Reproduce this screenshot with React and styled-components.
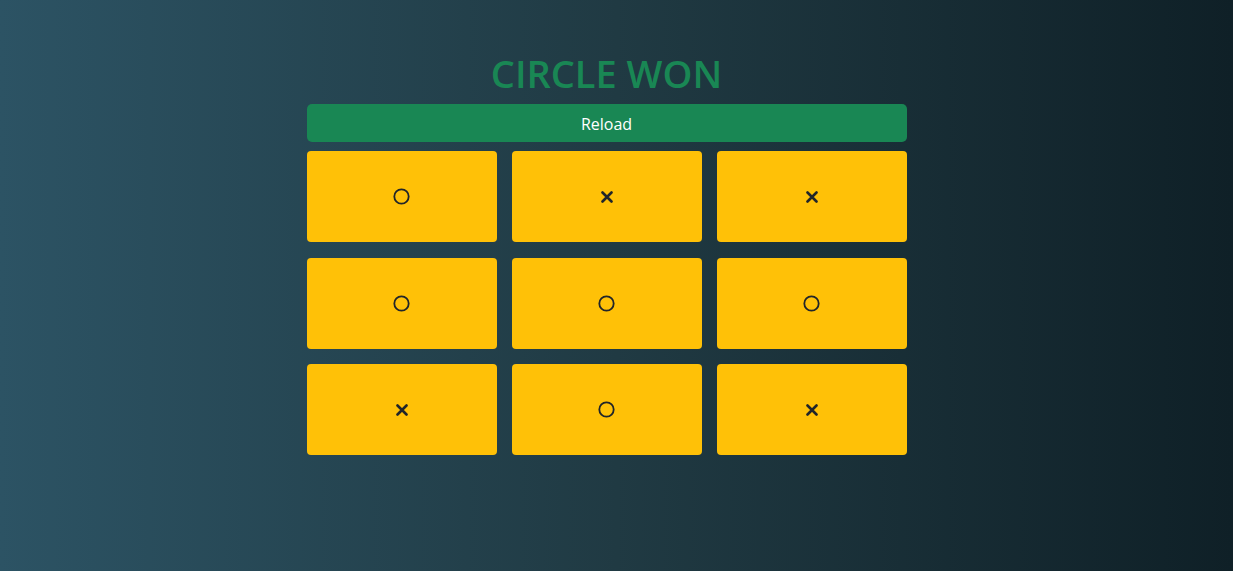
import React, { useState } from 'react';
import styled, { createGlobalStyle } from 'styled-components';

const GlobalStyle = createGlobalStyle`
    html, body {
        margin: 0;
        height: 100%;
    }
    body {
        font-family: 'Open Sans', 'Noto Sans', sans-serif;
        background: linear-gradient(to left, #0f2027, #203a43, #2c5364);
        min-height: 571px;
    }
`;

const Page = styled.div`
    display: flex;
    justify-content: center;
    padding-top: 48px;
    padding-right: 20px;
`;

const Board = styled.div`
    width: 600px;
    display: flex;
    flex-direction: column;
`;

const Title = styled.h1`
    margin: 0 0 8px;
    height: 48px;
    line-height: 50px;
    text-align: center;
    font-size: 38px;
    font-weight: 600;
    color: #198754;
`;

const ReloadBtn = styled.button`
    height: 38px;
    padding-top: 2px;
    border: none;
    border-radius: 5px;
    background-color: #198754;
    color: #fff;
    font-family: inherit;
    font-size: 16px;
    cursor: pointer;
    margin-bottom: 9px;
`;

const Grid = styled.div`
    display: grid;
    grid-template-columns: repeat(3, 1fr);
    grid-auto-rows: 91px;
    column-gap: 15px;
    row-gap: 15.5px;
`;

const Cell = styled.div`
    display: flex;
    justify-content: center;
    align-items: center;
    background-color: #ffc107;
    border-radius: 4px;
    color: #212529;
    cursor: pointer;
`;

const CircleIcon = () => (
    <svg width='17' height='17' viewBox='0 0 17 17'>
        <circle cx='8.5' cy='8.5' r='7.2' fill='none' stroke='currentColor' strokeWidth='1.8' />
    </svg>
);

const CrossIcon = () => (
    <svg width='12' height='12' viewBox='0 0 12 12'>
        <path d='M1.5 1.5 L10.5 10.5 M10.5 1.5 L1.5 10.5' stroke='currentColor' strokeWidth='2.6' strokeLinecap='round' />
    </svg>
);

const initial = ['circle', 'cross', 'cross', 'circle', 'circle', 'circle', 'cross', 'circle', 'cross'];

function App() {
    const [items] = useState(initial);
    return (
        <>
            <GlobalStyle />
            <Page>
                <Board>
                    <Title>CIRCLE WON</Title>
                    <ReloadBtn type='button'>Reload</ReloadBtn>
                    <Grid>
                        {items.map((item, i) => (
                            // eslint-disable-next-line react/no-array-index-key
                            <Cell key={i}>{item === 'circle' ? <CircleIcon /> : <CrossIcon />}</Cell>
                        ))}
                    </Grid>
                </Board>
            </Page>
        </>
    );
}

export default App;
